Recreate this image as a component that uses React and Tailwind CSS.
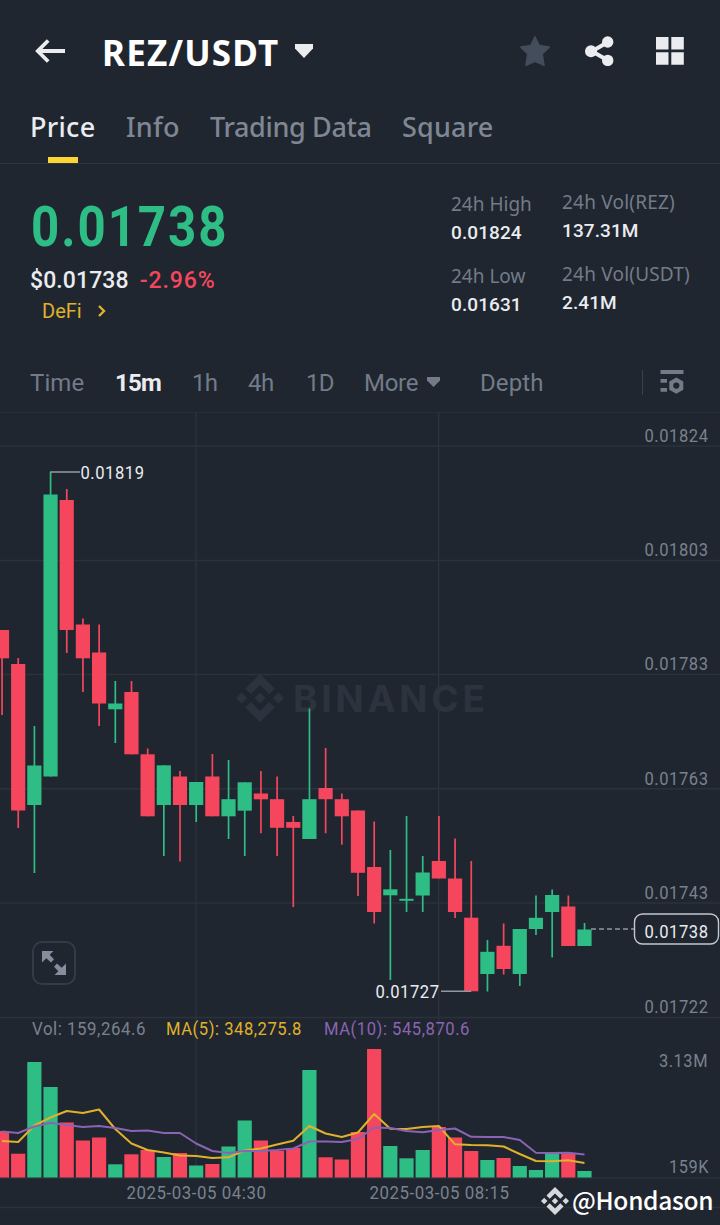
import { Fragment } from 'react';

const GREEN = '#2ebd85';
const RED = '#f6465d';
const GRID = '#2c323c';

const STEP = 16.18;
const FIRST_X = 2;
const BODY = 14.2;
const VOLUME_BASE = 1177.5;

// [direction, body top, body bottom, high, low, volume top]
const candles = [
  ['down', 630, 658.3, 630, 715, 1131],
  ['down', 664, 810.5, 658, 828, 1153.7],
  ['up', 765.5, 805, 726, 873, 1062],
  ['up', 494.5, 776.5, 472, 776.5, 1087],
  ['down', 500, 630, 489, 653, 1122.5],
  ['down', 624.5, 658.3, 618.5, 692, 1140.5],
  ['down', 652.5, 703.5, 624.5, 726, 1137.5],
  ['up', 703.5, 709.3, 681, 743, 1164.3],
  ['down', 692, 754.3, 681, 754.3, 1154.3],
  ['down', 754.3, 816.3, 748.5, 816.3, 1150],
  ['up', 765.3, 805, 765.3, 856, 1157],
  ['down', 776.5, 805, 771, 861.5, 1153],
  ['up', 782, 805, 782, 822, 1165.5],
  ['down', 776.5, 816.3, 754, 816.3, 1164],
  ['up', 799.2, 816.3, 760, 839, 1146.5],
  ['up', 782.3, 810.7, 782.3, 856, 1120.5],
  ['down', 793.5, 799.3, 771, 833.3, 1140.5],
  ['down', 799.2, 827.8, 776.5, 856, 1151],
  ['down', 822, 827.8, 816, 907, 1148],
  ['up', 799.2, 839, 708.5, 839, 1070],
  ['down', 788, 799.2, 748, 833.3, 1157.3],
  ['down', 799.2, 816.3, 793.5, 844.7, 1159.5],
  ['down', 810.5, 872.8, 810.5, 896, 1132],
  ['down', 867, 912, 821.5, 923.5, 1049],
  ['up', 889.3, 895.3, 850, 980, 1146],
  ['up', 898.8, 900.8, 816, 912, 1158.3],
  ['up', 872.5, 895.5, 856, 912, 1150],
  ['down', 861, 878.5, 816, 878.5, 1127],
  ['down', 878.5, 912, 838.5, 918, 1137.5],
  ['down', 917.7, 991.3, 861, 991.3, 1151],
  ['up', 951.8, 974, 940, 991.5, 1160],
  ['down', 945.8, 969, 923.5, 974.5, 1158],
  ['up', 929, 974, 929, 986, 1166],
  ['up', 917.8, 929, 895.5, 935, 1170],
  ['up', 895, 912, 889.5, 957.5, 1153],
  ['down', 906.5, 946, 895.5, 946, 1153],
  ['up', 929.5, 946, 923, 946, 1171]
];

const ma5 = [
  1141, 1142, 1125.5, 1117.5, 1111, 1113, 1109.5, 1129, 1143.5, 1150, 1152.5, 1155.5, 1156, 1158, 1157.3, 1150.5,
  1148.5, 1144.5, 1140.7, 1126, 1133.5, 1137, 1132.5, 1114, 1128.7, 1129, 1127, 1126, 1144.3, 1145, 1145.3, 1146.5,
  1154, 1161, 1161.3, 1160.3, 1163
];

const ma10 = [
  1131.5, 1133, 1126.5, 1122.8, 1125, 1127, 1126, 1128, 1131, 1130.5, 1133, 1133, 1143.5, 1151, 1153, 1151, 1151,
  1150, 1148.5, 1141.5, 1141.5, 1142, 1139, 1127.5, 1128, 1131, 1132.3, 1130, 1128.5, 1136.8, 1137, 1137, 1140,
  1152.7, 1153, 1152.7, 1154.5
];

const priceLabels = [
  ['0.01824', 442],
  ['0.01803', 556],
  ['0.01783', 670],
  ['0.01763', 785],
  ['0.01743', 899],
  ['0.01722', 1013]
];

const gridRows = [446, 560.5, 674.5, 788.7, 903, 1017.5];
const gridColumns = [196, 438.7];

const centerX = (index) => FIRST_X + index * STEP;
const toPoints = (values) => values.map((y, index) => `${centerX(index)},${y}`).join(' ');

const BinanceMark = ({ className }) => (
  <svg viewBox="0 0 48 48" fill="currentColor" className={className}>
    <path d="M24 0 38.6 14.6 33.1 20.1 24 11 14.9 20.1 9.4 14.6Z" />
    <path d="M24 48 38.6 33.4 33.1 27.9 24 37 14.9 27.9 9.4 33.4Z" />
    <path d="M5.5 18.5 11 24 5.5 29.5 0 24Z" />
    <path d="M42.5 18.5 48 24 42.5 29.5 37 24Z" />
    <path d="M24 18.5 29.5 24 24 29.5 18.5 24Z" />
  </svg>
);

const Header = () => (
  <header className="flex h-[102px] items-center pl-[35px] pr-9 text-[#eaecef]">
    <svg viewBox="0 0 30 24" className="h-6 w-[30px]" fill="none" stroke="currentColor" strokeWidth="3.8">
      <path d="M30 12H3M13.2 1.5 2.8 12 13.2 22.5" />
    </svg>
    <h1 className="ml-[37px] mt-0.5 w-[193px] whitespace-nowrap text-[35px] font-bold leading-none tracking-[1.2px] text-white">
      REZ/USDT
    </h1>
    <svg viewBox="0 0 18 14" className="h-3.5 w-[18px]" fill="currentColor">
      <path d="M0 0h18v4.5L9 14 0 4.5Z" />
    </svg>
    <div className="ml-auto flex items-center">
      <svg viewBox="0 0 30 30" className="h-[30px] w-[30px] text-[#444d5b]" fill="currentColor" stroke="currentColor">
        <path
          strokeWidth="1.5"
          strokeLinejoin="round"
          d="M15 .8 19.3 9.6 29.2 11.1 22.2 18 24 29.2 15 25.2 6 29.2 7.8 18 .8 11.1 10.7 9.6Z"
        />
      </svg>
      <svg viewBox="0 0 30 30" className="ml-[35px] h-[30px] w-[30px]" fill="currentColor" stroke="currentColor">
        <path strokeWidth="4" fill="none" d="M23 6 7 15.3 23 24.5" />
        <circle cx="22.7" cy="6" r="5.7" stroke="none" />
        <circle cx="6" cy="15.3" r="6" stroke="none" />
        <circle cx="22.7" cy="24.4" r="5.7" stroke="none" />
      </svg>
      <svg viewBox="0 0 28 28" className="ml-[41px] h-7 w-7" fill="currentColor">
        <path d="M0 0h12.5v12.5H0ZM15.3 0h12.5v12.5H15.3ZM0 15.3h12.5v12.5H0ZM15.3 15.3h12.5v12.5H15.3Z" />
      </svg>
    </div>
  </header>
);

const Tabs = () => (
  <nav className="flex h-[62px] border-b border-[#2f3540] pl-[30px] text-[27px] font-medium leading-[50px] text-[#7f8794]">
    <div className="flex w-[96px] flex-col text-[#eaecef]">
      <span className="tracking-[0.3px]">Price</span>
      <span className="ml-[18px] mt-[5px] h-1.5 w-[30px] bg-[#fcd535]" />
    </div>
    <span className="w-[84px] tracking-[0.3px]">Info</span>
    <span className="w-[192px] whitespace-nowrap tracking-[-0.35px]">Trading Data</span>
    <span className="tracking-[0.2px]">Square</span>
  </nav>
);

const Stat = ({ label, value }) => (
  <div className="h-[72px] whitespace-nowrap">
    <div className="font-['Noto_Sans',sans-serif] text-[19px] leading-7 text-[#737b89]">{label}</div>
    <div className="pt-px text-[19px] font-medium leading-7 tracking-[0.1px] text-[#eaecef]">{value}</div>
  </div>
);

const Summary = () => (
  <section className="flex h-[188px] font-[Roboto,sans-serif]">
    <div className="w-[451px] pl-[31px] pt-[31px]">
      <div className="origin-left scale-x-[0.88] text-[56px] font-bold leading-[64px] tracking-[2.2px] text-[#2ebd85]">
        0.01738
      </div>
      <div className="mt-2 flex gap-[11px] text-[23px] font-medium leading-7">
        <span className="ml-[-1px] tracking-[0.1px] text-[#eaecef]">$0.01738</span>
        <span className="tracking-[0.9px] text-[#f6465d]">-2.96%</span>
      </div>
      <div className="mt-0.5 flex items-center pl-[11px] text-[20px] leading-7 text-[#e0b12b]">
        DeFi
        <svg viewBox="0 0 8 12" className="ml-4 h-3 w-2" fill="none" stroke="currentColor" strokeWidth="2.4">
          <path d="m1 1 5 5-5 5" />
        </svg>
      </div>
    </div>
    <div className="w-[111px] pt-[26px]">
      <Stat label="24h High" value="0.01824" />
      <Stat label="24h Low" value="0.01631" />
    </div>
    <div className="pt-6 tracking-[0.2px]">
      <Stat label="24h Vol(REZ)" value="137.31M" />
      <Stat label="24h Vol(USDT)" value="2.41M" />
    </div>
  </section>
);

const Intervals = () => (
  <div className="flex h-[60px] items-center pl-[30px] font-[Roboto,sans-serif] text-[24px] tracking-[0.1px] text-[#737b89]">
    <span className="w-[85px] pt-0.5">Time</span>
    <span className="w-[77px] pt-0.5 font-bold tracking-[-0.8px] text-[#eaecef]">15m</span>
    <span className="w-[56px] pt-0.5 tracking-[-0.8px]">1h</span>
    <span className="w-[58px] pt-0.5 tracking-[-0.5px]">4h</span>
    <span className="w-[58px] pt-0.5 tracking-[-0.8px]">1D</span>
    <span className="w-[63px] pt-0.5 tracking-[-0.3px]">More</span>
    <svg viewBox="0 0 13 10" className="h-2.5 w-[13px]" fill="currentColor">
      <path d="M0 0h13v3.5L6.5 10 0 3.5Z" />
    </svg>
    <span className="ml-10 w-[162px] pt-0.5">Depth</span>
    <span className="h-[25px] w-px bg-[#3a414d]" />
    <svg viewBox="0 0 24 24" className="ml-[17px] h-6 w-6" fill="currentColor">
      <path d="M.5 0h23v4H.5ZM.5 9h6.5v3.7H.5ZM.5 18h6.5v3.7H.5Z" />
      <path fillRule="evenodd" d="m16.3 7.5 7 4v8.2l-7 4-7-4v-8.2Zm0 5a3.1 3.1 0 1 0 0 6.2 3.1 3.1 0 0 0 0-6.2Z" />
    </svg>
  </div>
);

const Candle = ({ candle, index }) => {
  const [direction, top, bottom, high, low, volume] = candle;
  const color = direction === 'up' ? GREEN : RED;
  const x = centerX(index);

  return (
    <Fragment>
      <rect x={x - 0.8} y={high} width="1.7" height={low - high} fill={color} />
      <rect x={x - BODY / 2} y={top} width={BODY} height={bottom - top} fill={color} />
      <rect x={x - BODY / 2} y={volume} width={BODY} height={VOLUME_BASE - volume} fill={color} />
    </Fragment>
  );
};

const Label = ({ x, y, width, fill, children }) => (
  <text x={x} y={y} textLength={width} lengthAdjust="spacingAndGlyphs" fill={fill} letterSpacing="0.6">
    {children}
  </text>
);

const Chart = () => (
  <svg
    viewBox="0 412 720 813"
    className="block h-[813px] w-[720px] font-[Roboto,sans-serif] text-[18.5px]"
    fill="#7a818e"
  >
    <g stroke={GRID} strokeWidth="1.5">
      <path d="M0 412H720M0 1178H720M0 1207.5H720" />
      {gridRows.map((y) => (
        <path key={y} d={`M0 ${y}H720`} />
      ))}
      {gridColumns.map((x) => (
        <path key={x} d={`M${x} 412V1178`} />
      ))}
    </g>

    <text x="293" y="712" textLength="192" fill="#2d333e" className="font-[Inter,sans-serif] text-[37px] font-bold">
      BINANCE
    </text>

    {candles.map((candle, index) => (
      <Candle key={index} candle={candle} index={index} />
    ))}

    <g fill="none" strokeWidth="2" strokeLinejoin="round">
      <polyline points={toPoints(ma5)} stroke="#e0b12b" />
      <polyline points={toPoints(ma10)} stroke="#8a64b4" />
    </g>

    {priceLabels.map(([label, y]) => (
      <Label key={label} x="644.5" y={y} width="64">
        {label}
      </Label>
    ))}
    <Label x="659" y="1067" width="49">3.13M</Label>
    <Label x="669" y="1173" width="40">159K</Label>

    <g stroke="#9298a3" strokeWidth="1.6" fill="none">
      <path d="M50 472H80M441 991.3H471" />
      <path d="M591 929H634" strokeDasharray="5 3" />
    </g>
    <rect x="634.5" y="914" width="84" height="30" rx="8" fill="#1f262f" stroke="#c3c7cf" strokeWidth="1.4" />
    <Label x="644.5" y="938" width="64" fill="#eaecef">0.01738</Label>
    <Label x="80.5" y="479" width="64" fill="#eaecef">0.01819</Label>
    <Label x="375.5" y="998" width="64" fill="#eaecef">0.01727</Label>

    <Label x="32" y="1035" width="114">Vol: 159,264.6</Label>
    <Label x="166" y="1035" width="136" fill="#e0b12b">MA(5): 348,275.8</Label>
    <Label x="324" y="1035" width="146" fill="#8a64b4">MA(10): 545,870.6</Label>
    <Label x="126.5" y="1199" width="140">2025-03-05 04:30</Label>
    <Label x="369.5" y="1199" width="140">2025-03-05 08:15</Label>
  </svg>
);

export default function App() {
  return (
    <main className="relative h-[1225px] w-[720px] overflow-hidden bg-[#1f262f] font-['Noto_Sans',sans-serif]">
      <Header />
      <Tabs />
      <Summary />
      <Intervals />
      <Chart />

      <BinanceMark className="absolute left-[236px] top-[674px] h-12 w-12 text-[#2d333e]" />

      <button
        type="button"
        className="absolute left-8 top-[941px] flex h-11 w-11 items-center justify-center rounded-[10px] border-2 border-[#343b47] text-[#848e9c]"
      >
        <svg viewBox="0 0 24 24" className="h-6 w-6" fill="currentColor">
          <path d="M0 0h11.5L7.7 3.8 12 8.2 9 11.5 4.3 7.2 0 11.5Z" />
          <path d="M24 24H12.5l3.8-3.8L12 15.8 15 12.5l4.7 4.3L24 12.5Z" />
        </svg>
      </button>

      <div className="absolute left-[541px] top-[1184px] flex items-center gap-[3px] text-white">
        <BinanceMark className="mt-0.5 h-7 w-7 text-[#d5d8dc]" />
        <span className="font-['Noto_Sans_CJK_SC',sans-serif] text-[24.5px] font-medium leading-8 tracking-[-0.3px]">
          @Hondason
        </span>
      </div>
    </main>
  );
}
